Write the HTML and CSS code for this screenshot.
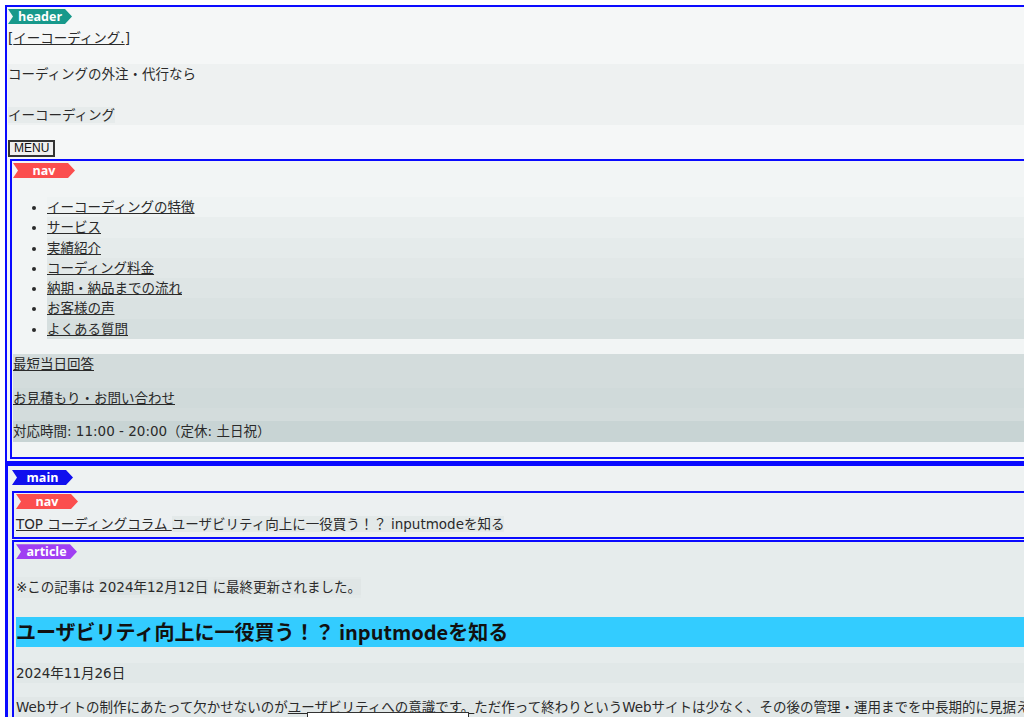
FILE: index.html
```html
<!DOCTYPE html>
<html lang="ja">
<head>
<meta charset="utf-8">
<title>ユーザビリティ向上に一役買う！？ inputmodeを知る</title>
<link rel="stylesheet" href="styles.css">
</head>
<body>
<header class="site-header">
  <span class="tag tag-header">header</span>
  <p class="logo">[<a href="#">イーコーディング.</a>]</p>
  <div class="catch">コーディングの外注・代行なら<br><br><span class="catch-name">イーコーディング</span></div>
  <button class="menu-btn" type="button">MENU</button>
  <nav class="gnav">
    <span class="tag tag-nav">nav</span>
    <ul class="gnav-list">
      <li class="g1"><a href="#">イーコーディングの特徴</a></li>
      <li class="g2"><a href="#">サービス</a></li>
      <li class="g3"><a href="#">実績紹介</a></li>
      <li class="g4"><a href="#">コーディング料金</a></li>
      <li class="g5"><a href="#">納期・納品までの流れ</a></li>
      <li class="g6"><a href="#">お客様の声</a></li>
      <li class="g7"><a href="#">よくある質問</a></li>
    </ul>
    <div class="contact">
      <p class="contact-row"><a href="#">最短当日回答</a></p>
      <p class="contact-row r2"><a href="#">お見積もり・お問い合わせ</a></p>
      <p class="contact-row r3">対応時間: 11:00 - 20:00（定休: 土日祝）</p>
    </div>
  </nav>
</header>
<main class="main">
  <span class="tag tag-main">main</span>
  <nav class="crumb-nav">
    <span class="tag tag-nav">nav</span>
    <p class="crumbs"><a href="#">TOP コーディングコラム </a><span class="crumb-current">ユーザビリティ向上に一役買う！？ inputmodeを知る</span></p>
  </nav>
  <article class="article">
    <span class="tag tag-article">article</span>
    <p class="updated"><span class="u1">※この記事は</span> <span class="u2">2024年12月12日</span> <span class="u3">に最終更新されました。</span></p>
    <h1 class="title">ユーザビリティ向上に一役買う！？ inputmodeを知る</h1>
    <p class="date">2024年11月26日</p>
    <p class="body-text">Webサイトの制作にあたって欠かせないのが<a href="#">ユーザビリティへの意識です。</a>ただ作って終わりというWebサイトは少なく、その後の管理・運用までを中長期的に見据えて制作することが大切です。</p>
  </article>
</main>
<div class="note-pop"></div>
</body>
</html>
```

FILE: styles.css
```css
html {
  overflow: hidden;
  background: #ffffff;
}

body {
  margin: 5px;
  width: 1160px;
  font-family: "DejaVu Sans", "Noto Sans CJK JP", sans-serif;
  font-size: 13.5px;
  line-height: 1.5;
  color: #2a2a2a;
}

a {
  color: #2a2a2a;
  text-decoration: underline;
}

.tag {
  display: block;
  width: 62px;
  height: 15px;
  line-height: 15px;
  text-align: center;
  color: #ffffff;
  font-family: "Open Sans", "DejaVu Sans", sans-serif;
  font-weight: bold;
  font-size: 12.5px;
  clip-path: polygon(0 0, calc(100% - 7px) 0, 100% 50%, calc(100% - 7px) 100%, 0 100%, 5px 50%);
}

.tag-header { background: #17998b; width: 64px; }
.tag-nav { background: #fb4e4e; }
.tag-main { background: #1010ee; width: 61px; }
.tag-article { background: #a03ff2; width: 61px; }

/* header */
.site-header {
  border: 2px solid #0a0aff;
  padding: 2px 1px;
  background: #f5f7f7;
}

.logo {
  margin: 4px 0 16px;
}

.catch {
  margin: 0;
  background: #eef1f1;
}

.catch-name {
  background: #e6ebeb;
}

.menu-btn {
  display: block;
  margin: 15px 0 0;
  width: 47px;
  height: 17px;
  padding: 0 4px;
  border: 2px solid #333333;
  background: #efefef;
  font-family: "Liberation Sans", sans-serif;
  font-size: 12px;
  line-height: 13px;
  color: #111111;
}

.gnav {
  margin: 2px 0 0 2px;
  border: 2px solid #0a0aff;
  padding: 2px 1px;
  background: #f2f5f5;
}

.gnav-list {
  margin: 19px 0 15px;
  padding-left: 34px;
  list-style: disc;
}

.g1 { background: #eff3f3; }
.g2 { background: #e9eeee; }
.g3 { background: #e5ebeb; }
.g4 { background: #e2e8e8; }
.g5 { background: #dee5e5; }
.g6 { background: #dae2e2; }
.g7 { background: #d6dfdf; }

.contact {
  background: #d3dcdc;
}

.contact-row {
  margin: 13.5px 0;
}

.contact-row.r2 { background: #d0dada; }
.contact-row.r3 { background: #c8d4d4; }

/* main */
.main {
  display: block;
  border: 3px solid #0a0aff;
  padding: 4px 0 0 4px;
  background: #eef2f2;
}

.crumb-nav {
  margin-top: 6px;
  border: 2px solid #0a0aff;
  padding: 1px 2px 3px;
  background: #ecf0f1;
}

.crumbs {
  margin: 5px 0 0;
}

.crumb-current {
  background: #e3e9e9;
}

.article {
  display: block;
  margin-top: 1px;
  border: 2px solid #0a0aff;
  padding: 2px 2px 0;
  background: #e6ecec;
}

.updated {
  margin: 18px 0 0;
  width: fit-content;
  background: #e3e9e9;
}

.updated .u2 { background: #dce3e3; }
.updated .u3 { background: #e0e6e6; }

.title {
  margin: 19px 0 0;
  background: #33ccff;
  font-family: "Noto Sans CJK JP", sans-serif;
  font-weight: bold;
  font-size: 20px;
  line-height: 30px;
  color: #111111;
}

.date {
  margin: 16px 0 0;
  background: #e1e8e8;
}

.body-text {
  margin: 14px 0 0;
  background: #e1e7e7;
}

.note-pop {
  position: absolute;
  left: 307px;
  top: 712px;
  width: 160px;
  height: 40px;
  background: #ffffff;
  border: 1px solid #333333;
}
```
